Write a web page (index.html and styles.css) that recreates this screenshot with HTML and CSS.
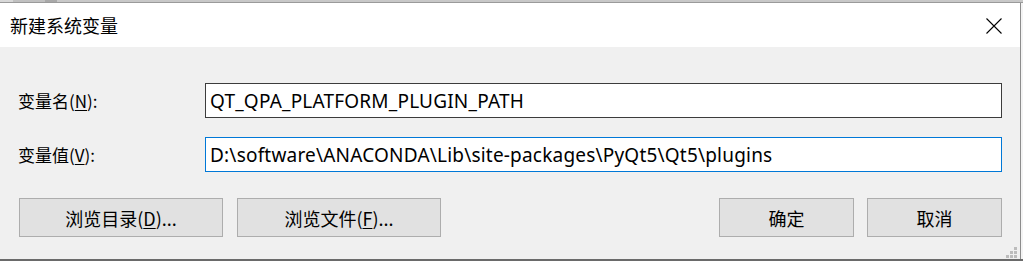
FILE: index.html
```html
<!DOCTYPE html>
<html lang="zh">
<head>
<meta charset="utf-8">
<title>新建系统变量</title>
<link rel="stylesheet" href="styles.css">
</head>
<body>
<div class="screen">
  <div class="behind-top"><span class="seg seg-a"></span><span class="seg seg-b"></span><span class="seg seg-c"></span></div>
  <div class="dialog">
    <div class="titlebar">
      <span class="title">新建系统变量</span>
      <span class="close" aria-label="关闭">
        <svg width="16" height="16" viewBox="0 0 16 16"><path d="M0.5 0.5 L15.5 15.5 M15.5 0.5 L0.5 15.5" stroke="#000" stroke-width="1.1" fill="none"/></svg>
      </span>
    </div>
    <div class="body">
      <div class="row">
        <label class="label">变量名(<u>N</u>):</label>
        <div class="field">QT_QPA_PLATFORM_PLUGIN_PATH</div>
      </div>
      <div class="row row-2">
        <label class="label">变量值(<u>V</u>):</label>
        <div class="field focused">D:\software\ANACONDA\Lib\site-packages\PyQt5\Qt5\plugins</div>
      </div>
      <div class="buttons">
        <div class="group">
          <button class="btn btn-wide">浏览目录(<u>D</u>)...</button>
          <button class="btn btn-wide">浏览文件(<u>F</u>)...</button>
        </div>
        <div class="group group-right">
          <button class="btn btn-narrow">确定</button>
          <button class="btn btn-narrow">取消</button>
        </div>
      </div>
      <svg class="grip" width="12" height="12" viewBox="0 0 12 12">
        <rect x="8" y="0" width="3" height="3" fill="#bcbcbc"/>
        <rect x="4" y="4" width="3" height="3" fill="#bcbcbc"/>
        <rect x="8" y="4" width="3" height="3" fill="#bcbcbc"/>
        <rect x="0" y="8" width="3" height="3" fill="#bcbcbc"/>
        <rect x="4" y="8" width="3" height="3" fill="#bcbcbc"/>
        <rect x="8" y="8" width="3" height="3" fill="#bcbcbc"/>
      </svg>
    </div>
  </div>
  <div class="behind-bottom"></div>
</div>
</body>
</html>
```

FILE: styles.css
```css
html, body {
  margin: 0;
  padding: 0;
  background: #9a9a9a;
}
body {
  width: 1023px;
  height: 261px;
  overflow: hidden;
  font-family: "Noto Sans", "Noto Sans CJK SC", sans-serif;
}
.screen {
  width: 1023px;
  height: 261px;
  display: flex;
  flex-direction: column;
  background: #f4f4f4;
}
.behind-top {
  height: 3px;
  display: flex;
  background: #c8c8c8;
  border-bottom: 1px solid #9a9a9a;
  box-sizing: border-box;
}
.seg-a { width: 13px; background: #d8d8d8; }
.seg-b { width: 32px; background: #c0c0c0; }
.seg-c { width: 12px; background: #a8a8a8; }
.dialog {
  width: 1021px;
  height: 256px;
  border-right: 1px solid #8c8c8c;
  box-sizing: border-box;
  display: flex;
  flex-direction: column;
  background: #f0f0f0;
}
.titlebar {
  height: 44px;
  background: #ffffff;
  display: flex;
  align-items: center;
  justify-content: space-between;
  padding: 0 11px 0 10px;
  flex: none;
}
.title {
  font-family: "Noto Sans CJK SC", sans-serif;
  font-size: 18px;
  color: #000;
  line-height: 1;
  padding-bottom: 1px;
}
.close {
  width: 16px;
  height: 16px;
  display: flex;
  margin-right: 7px;
  margin-top: 1px;
}
.body {
  position: relative;
  flex: 1;
  padding: 36px 18px 0 18px;
  display: flex;
  flex-direction: column;
}
.row {
  display: flex;
  align-items: center;
  height: 35px;
}
.row-2 {
  margin-top: 19px;
}
.label {
  width: 187px;
  flex: none;
  font-family: "Noto Sans CJK SC", sans-serif;
  font-size: 17px;
  color: #000;
}
.label u {
  text-underline-offset: 2px;
}
.field {
  width: 797px;
  height: 35px;
  box-sizing: border-box;
  border: 1px solid #3c3c3c;
  background: #fff;
  padding: 0 0 0 4px;
  display: flex;
  align-items: center;
  font-family: "Noto Sans", sans-serif;
  font-size: 19px;
  letter-spacing: 0.2px;
  color: #000;
  white-space: nowrap;
  overflow: hidden;
}
.field.focused {
  border-color: #0078d7;
}
.buttons {
  margin-top: 26px;
  display: flex;
  justify-content: space-between;
  padding-left: 1px;
}
.group {
  display: flex;
  gap: 14px;
}
.group-right {
  gap: 13px;
}
.btn {
  height: 39px;
  box-sizing: border-box;
  border: 1px solid #adadad;
  background: #e1e1e1;
  font-family: "Noto Sans CJK SC", sans-serif;
  font-size: 18px;
  color: #000;
  padding: 0;
  display: flex;
  align-items: center;
  justify-content: center;
}
.btn u {
  text-underline-offset: 2px;
}
.btn-wide { width: 204px; }
.btn-narrow { width: 135px; }
.grip {
  position: absolute;
  right: 2px;
  bottom: 0px;
}
.behind-bottom {
  height: 2px;
  background: #6a6a6a;
}
```
